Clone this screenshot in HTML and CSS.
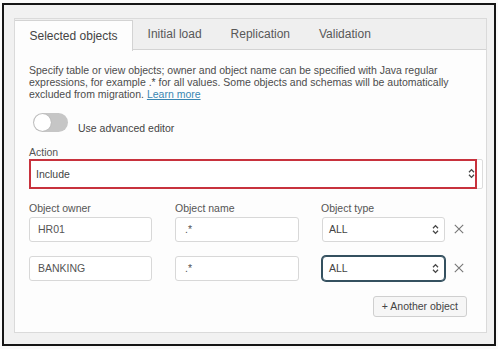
FILE: index.html
```html
<!DOCTYPE html>
<html lang="en">
<head>
<meta charset="utf-8">
<title>Selected objects</title>
<link rel="stylesheet" href="styles.css">
</head>
<body>
<div class="frame">
  <div class="panel">
    <div class="tabs">
      <div class="tab active">Selected objects</div>
      <div class="tab">Initial load</div>
      <div class="tab">Replication</div>
      <div class="tab">Validation</div>
    </div>
    <div class="content">
      <p class="desc"><span class="desc-main">Specify table or view objects; owner and object name can be specified with Java regular expressions, for example .* for all values. Some objects and schemas will be automatically</span>
        <span class="desc-last">excluded from migration. <a class="link" href="#">Learn more</a></span></p>
      <div class="toggle-row">
        <span class="toggle"><span class="knob"></span></span>
        <span class="toggle-label">Use advanced editor</span>
      </div>
      <div class="label action-label">Action</div>
      <div class="action-select">
        <span class="value">Include</span>
        <svg class="chev" width="7" height="11" viewBox="0 0 7 11"><path d="M1 4.2 L3.5 1.6 L6 4.2 M1 6.8 L3.5 9.4 L6 6.8" fill="none" stroke="#444" stroke-width="1.3"/></svg>
        <span class="highlight"></span>
      </div>
      <div class="rows">
        <div class="row labels">
          <span class="col label">Object owner</span>
          <span class="col label">Object name</span>
          <span class="col label">Object type</span>
        </div>
        <div class="row fields">
          <div class="col input">HR01</div>
          <div class="col input name">.*</div>
          <div class="col input select">ALL<svg class="chev" width="7" height="11" viewBox="0 0 7 11"><path d="M1 4.2 L3.5 1.6 L6 4.2 M1 6.8 L3.5 9.4 L6 6.8" fill="none" stroke="#444" stroke-width="1.3"/></svg></div>
          <svg class="remove" width="10" height="10" viewBox="0 0 10 10"><path d="M0.8 0.8 L9.2 9.2 M9.2 0.8 L0.8 9.2" fill="none" stroke="#777" stroke-width="1.1"/></svg>
        </div>
        <div class="row fields second">
          <div class="col input">BANKING</div>
          <div class="col input name">.*</div>
          <div class="col input select focused">ALL<svg class="chev" width="7" height="11" viewBox="0 0 7 11"><path d="M1 4.2 L3.5 1.6 L6 4.2 M1 6.8 L3.5 9.4 L6 6.8" fill="none" stroke="#444" stroke-width="1.3"/></svg></div>
          <svg class="remove" width="10" height="10" viewBox="0 0 10 10"><path d="M0.8 0.8 L9.2 9.2 M9.2 0.8 L0.8 9.2" fill="none" stroke="#777" stroke-width="1.1"/></svg>
        </div>
        <div class="actions">
          <button class="add-btn" type="button">+ Another object</button>
        </div>
      </div>
    </div>
  </div>
</div>
</body>
</html>
```
FILE: styles.css
```css
* { box-sizing: border-box; }
html, body { margin: 0; padding: 0; background: #fafafa; }
body {
  font-family: "Liberation Sans", Arial, sans-serif;
  color: #444;
  width: 498px;
  height: 349px;
  overflow: hidden;
}
.frame {
  margin: 3px 0 0 2px;
  width: 494px;
  height: 343px;
  border: 2px solid #151515;
  background: #f1f1f1;
  padding: 13px 7px 11px 10px;
}
.panel {
  width: 100%;
  height: 100%;
  background: #fdfdfd;
  border: 1px solid #dadada;
}
.tabs {
  display: flex;
  height: 31px;
  padding-top: 1px;
  background: #efefef;
  border-bottom: 1px solid #d3d3d3;
}
.tab {
  display: flex;
  align-items: center;
  padding: 0 14.5px 1px;
  font-size: 12px;
  color: #585858;
}
.tab.active {
  background: #fdfdfd;
  color: #444;
  border: 1px solid #d3d3d3;
  border-bottom: none;
  border-left: none;
  margin-bottom: -1px;
  height: 31px;
}
.content {
  padding: 14px 3px 0 14px;
}
.desc {
  margin: 0;
  font-size: 10.5px;
  line-height: 12.2px;
  color: #4c4c4c;
}
.desc-last {
  display: block;
}
.link {
  color: #3a86b2;
  text-decoration: underline;
}
.toggle-row {
  display: flex;
  align-items: flex-end;
  margin-top: 12px;
  padding-left: 4px;
}
.toggle {
  position: relative;
  display: block;
  width: 35px;
  height: 19px;
  border-radius: 10px;
  background: #c6c6c6;
  margin-bottom: 2px;
}
.knob {
  position: absolute;
  left: 1px;
  top: 1px;
  width: 17px;
  height: 17px;
  border-radius: 50%;
  background: #fff;
  box-shadow: 0 0 1px rgba(0,0,0,0.3);
}
.toggle-label {
  margin-left: 10px;
  font-size: 10.5px;
  line-height: 12px;
  color: #444;
}
.label {
  font-size: 10.5px;
  line-height: 12px;
  color: #555;
}
.action-label {
  margin-top: 12px;
}
.action-select {
  position: relative;
  display: flex;
  align-items: center;
  justify-content: space-between;
  margin-top: 1px;
  height: 30px;
  border: 1px solid #dcdcdc;
  border-radius: 2px;
  background: #fff;
  padding: 0 7px 0 6px;
  font-size: 10.5px;
  color: #444;
}
.highlight {
  position: absolute;
  left: -1px;
  top: -1px;
  bottom: -1px;
  right: 5px;
  border: 2px solid #c8323d;
}
.rows {
  width: 438px;
}
.row {
  display: flex;
  align-items: center;
  gap: 23px;
}
.labels {
  margin-top: 13px;
}
.col {
  width: 123px;
  flex: none;
}
.fields {
  margin-top: 3px;
}
.fields.second {
  margin-top: 14px;
}
.input {
  height: 25px;
  display: flex;
  align-items: center;
  justify-content: space-between;
  border: 1px solid #d8d8d8;
  border-radius: 3px;
  background: #fff;
  padding: 0 5px 0 8px;
  font-size: 10.5px;
  color: #555;
}
.input.name {
  width: 124px;
  padding-left: 9px;
}
.input.select {
  padding-left: 6px;
  color: #444;
}
.input.focused {
  border-color: #34505f;
  border-radius: 4px;
  box-shadow: 0 0 0 1px #34505f;
}
.remove {
  margin-left: -14px;
  flex: none;
}
.actions {
  display: flex;
  justify-content: flex-end;
  margin-top: 15px;
}
.add-btn {
  height: 21px;
  padding: 0 8px;
  border: 1px solid #cfcfcf;
  border-radius: 3px;
  background: #f6f6f6;
  font-family: "Liberation Sans", Arial, sans-serif;
  font-size: 10.5px;
  color: #444;
}
```
